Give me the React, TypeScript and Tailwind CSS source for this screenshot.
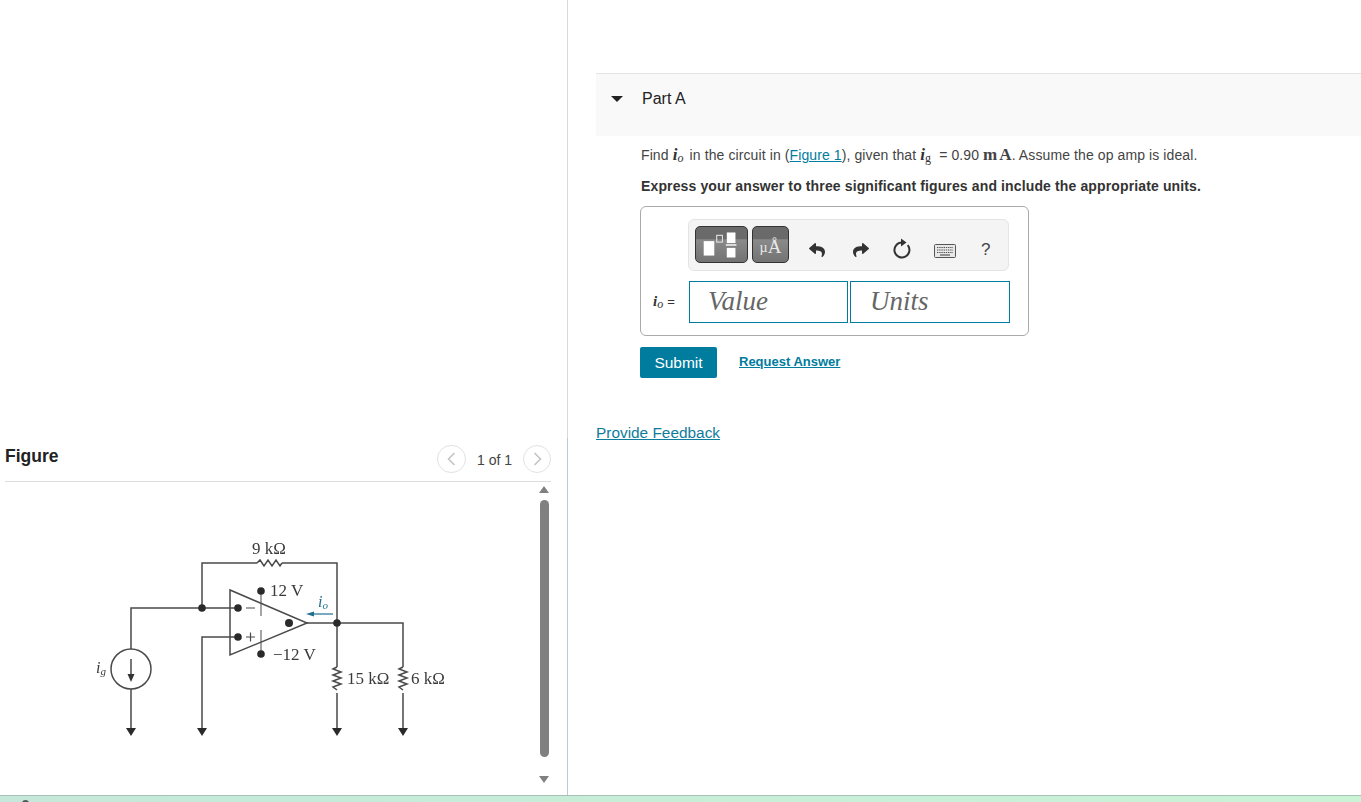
import { FaReply, FaShare } from 'react-icons/fa';

const sans = { fontFamily: '"Liberation Sans", Arial, sans-serif' };

function MathVar({ sub, small }: { sub: string; small?: boolean }) {
  const wide = sub === 'g' ? 'w-[15px]' : 'w-[13px]';
  return (
    <span className={`inline-block ${small ? '' : wide} font-['Liberation_Serif',serif] text-[#333] leading-none`}>
      <i className={small ? 'text-[15px] font-bold' : 'text-[17px] font-bold'}>i</i>
      <sub className={sub === 'g' ? 'static text-[12px] align-[-2px] leading-none' : 'static text-[12px] italic align-[-2px] leading-none'}>{sub}</sub>
    </span>
  );
}

function Circuit() {
  const wire = '#4a4a4a';
  const down = (x: number) => `${x - 5},728 ${x + 5},728 ${x},736`;
  return (
    <svg width="534" height="313" viewBox="5 482 534 313" className="block blur-[0.3px]">
      <g fill="none" stroke={wire} strokeWidth="1.5">
        <path d="M202 608V563H257M282 563H337V667M337 693V729" />
        <path d="M257 563l3 -3 4 6 4 -6 4 6 4 -6 4 6 2 -3" />
        <path d="M131 649V608H238M131 689V729M202 729V637H238" />
        <path d="M307 623H403V667M403 693V729" />
        <path d="M337 667l-4 2 8 3 -8 3 8 3 -8 3 8 3 -8 3 4 3" />
        <path d="M403 667l-4 2 8 3 -8 3 8 3 -8 3 8 3 -8 3 4 3" />
        <path d="M230 590V655L307 623Z" />
        <path d="M261 591V616M261 630V654" strokeWidth="1" />
        <circle cx="131" cy="669" r="20" />
        <path d="M131 659V674" />
        <path d="M246 608H255M246 637H255M250.5 632.5V641.5" strokeWidth="1.2" />
      </g>
      <polygon points="127.5,674 134.5,674 131,682" fill="#333" />
      <g fill="#2a2a2a">
        <circle cx="202" cy="608" r="3.8" />
        <circle cx="238" cy="608" r="3.8" />
        <circle cx="238" cy="637" r="3.8" />
        <circle cx="289" cy="623" r="4" />
        <circle cx="337" cy="623" r="3.8" />
        <circle cx="261" cy="591" r="3.8" />
        <circle cx="261" cy="654" r="3.8" />
        <polygon points={down(131)} />
        <polygon points={down(202)} />
        <polygon points={down(337)} />
        <polygon points={down(403)} />
      </g>
      <path d="M313 614H333" stroke="#1f6f8f" strokeWidth="1.2" />
      <polygon points="306,614 314,611.5 314,616.5" fill="#1f6f8f" />
      <g fontFamily='"Liberation Serif", serif' fontSize="17" fill="#3a3a3a">
        <text x="252" y="554">9 kΩ</text>
        <text x="270" y="596">12 V</text>
        <text x="273" y="660">−12 V</text>
        <text x="347" y="684">15 kΩ</text>
        <text x="411" y="684">6 kΩ</text>
        <text x="318" y="607" fontStyle="italic" fill="#1f6f8f" fontSize="16">i<tspan fontSize="11" dy="2">o</tspan></text>
        <text x="96" y="673" fontStyle="italic" fontSize="16">i<tspan fontSize="11" dy="2">g</tspan></text>
      </g>
    </svg>
  );
}

function TemplateIcon() {
  return (
    <svg width="53" height="37" viewBox="0 0 53 37">
      <rect x="8" y="15" width="11" height="15" fill="#fff" />
      <rect x="21.5" y="9" width="6" height="7" fill="none" stroke="#ddd" strokeWidth="1.2" />
      <rect x="32" y="6" width="9" height="11" fill="#fff" />
      <rect x="31" y="18" width="11" height="2" fill="#ddd" />
      <rect x="32" y="22" width="9" height="10" fill="#fff" />
    </svg>
  );
}

function KeyboardIcon() {
  return (
    <svg width="22" height="14" viewBox="0 0 22 14">
      <rect x="0.5" y="0.5" width="21" height="13" rx="1" fill="#e8e8e8" stroke="#555" />
      <path d="M3 3.5H19M3 6H19M3 8.5H19" stroke="#555" strokeWidth="1" strokeDasharray="1.4 0.8" />
      <path d="M6 11H16" stroke="#555" strokeWidth="1.2" />
    </svg>
  );
}

function ResetIcon() {
  return (
    <svg width="18" height="21" viewBox="0 0 18 21">
      <path d="M9 4.5A7.5 7.5 0 1 0 14.7 7.2" fill="none" stroke="#333" strokeWidth="2" />
      <polygon points="8,0.5 13.5,4.5 8,8.5" fill="#333" />
    </svg>
  );
}

function App() {
  return (
    <div className="w-[1361px] h-[802px] overflow-hidden bg-white flex flex-col" style={sans}>
      <div className="flex h-[795px]">
        {/* Figure pane */}
        <div className="w-[567px] pt-[445px] pl-[5px] pr-[16px]">
          <div className="flex items-start justify-between h-[36px] border-b border-[#dcdcdc] box-content w-[546px]">
            <h2 className="text-[17.5px] leading-[20px] font-bold text-[#222] mt-[1px]">Figure</h2>
            <div className="flex items-center h-[28px]">
              <span className="w-[29px] h-[28px] rounded-full border border-[#e2e2e2] flex items-center justify-center">
                <svg width="9" height="14" viewBox="0 0 9 14"><path d="M7.5 1L1.5 7l6 6" fill="none" stroke="#c4c4c4" strokeWidth="1.6" /></svg>
              </span>
              <span className="text-[14px] text-[#444] ml-[11px] mr-[11px] mt-[2px]">1 of 1</span>
              <span className="w-[28px] h-[28px] rounded-full border border-[#e2e2e2] flex items-center justify-center">
                <svg width="9" height="14" viewBox="0 0 9 14"><path d="M1.5 1l6 6-6 6" fill="none" stroke="#c4c4c4" strokeWidth="1.6" /></svg>
              </span>
            </div>
          </div>
          <div className="flex w-[546px] h-[313px]">
            <Circuit />
            <div className="w-[10px] h-[313px] flex flex-col items-center pt-[4px]">
              <div className="w-0 h-0 border-x-[5px] border-x-transparent border-b-[7px] border-b-[#808080]" />
              <div className="w-[9px] h-[257px] rounded-full bg-[#808080] mt-[7px]" />
              <div className="mt-[19px] w-0 h-0 border-x-[5px] border-x-transparent border-t-[7px] border-t-[#808080]" />
            </div>
          </div>
        </div>

        <div className="w-px flex flex-col">
          <div className="h-[438px] bg-[#d9d9d9]" />
          <div className="flex-1 bg-[#b9c9d8]" />
        </div>

        {/* Question pane */}
        <div className="flex-1 pt-[73px] pl-[28px]">
          <div className="h-[63px] bg-[#f9f9f9] border-t border-[#e3e3e3] flex items-start pt-[15px] pl-[15px]">
            <span className="w-0 h-0 mt-[7px] border-x-[6px] border-x-transparent border-t-[6px] border-t-[#222]" />
            <span className="ml-[19px] text-[16px] leading-[20px] text-[#222]">Part A</span>
          </div>
          <div className="pl-[45px]">
            <p className="mt-[9px] text-[14px] leading-[20px] tracking-[0.1px] text-[#444] whitespace-nowrap">
              Find <MathVar sub="o" /> in the circuit in (<a className="text-[#007c9e] underline">Figure 1</a>), given that <MathVar sub="g" /> = 0.90 <span className="font-['Liberation_Serif',serif] font-bold text-[17px] leading-none"><span className="tracking-[2px]">m</span>A</span>. Assume the op amp is ideal.
            </p>
            <p className="mt-[11px] text-[14px] leading-[20px] tracking-[0.13px] font-bold text-[#333] whitespace-nowrap">
              Express your answer to three significant figures and include the appropriate units.
            </p>

            <div className="mt-[10px] -ml-px w-[389px] h-[130px] border border-[#aaaaaa] rounded-[6px] pt-[12px] pl-[47px]">
              <div className="w-[321px] h-[52px] bg-[#f4f4f4] border border-[#e4e4e4] rounded-[6px] flex items-center pl-[6px]">
                <div className="w-[53px] h-[37px] mb-[1px] rounded-[5px] border border-[#333] bg-[linear-gradient(#6a6a6a_0,#6a6a6a_35%,#8a8a8a_36%,#737373_100%)] flex items-center justify-center">
                  <TemplateIcon />
                </div>
                <div className="ml-[4px] w-[37px] h-[37px] mb-[1px] pt-[5px] rounded-[5px] border border-[#333] bg-[linear-gradient(#6a6a6a_0,#6a6a6a_35%,#8a8a8a_36%,#737373_100%)] flex items-center justify-center font-['Liberation_Serif',serif] text-[#e8e8e8] text-[14px]">
                  µ<span className="text-[19px]">Å</span>
                </div>
                <span className="ml-[20px] mt-[9px] w-[16px] flex justify-center text-[#333]"><FaReply size={16} /></span>
                <span className="ml-[28px] mt-[9px] w-[16px] flex justify-center text-[#333]"><FaShare size={16} /></span>
                <span className="ml-[24px] mt-[7px] flex"><ResetIcon /></span>
                <span className="ml-[23px] mt-[11px] flex"><KeyboardIcon /></span>
                <span className="ml-[25px] mt-[9px] text-[17px] text-[#444]">?</span>
              </div>
              <div className="flex items-center mt-[10px] ml-[-35px]">
                <span className="w-[36px] whitespace-nowrap text-[13px] text-[#333]"><MathVar sub="o" small /><span className="ml-[4px]">=</span></span>
                <div className="w-[159px] h-[42px] border border-[#007c9e] pl-[18px] font-['Liberation_Serif',serif] italic text-[27px] leading-[38px] text-[#666]">Value</div>
                <div className="ml-[2px] w-[160px] h-[42px] border border-[#007c9e] pl-[19px] font-['Liberation_Serif',serif] italic text-[27px] leading-[38px] text-[#666]">Units</div>
              </div>
            </div>

            <div className="mt-[11px] -ml-px flex items-center">
              <button className="w-[77px] h-[31px] bg-[#007c9e] rounded-[2px] text-white text-[15.5px]">Submit</button>
              <a className="ml-[22px] mb-[2px] text-[13px] font-bold text-[#007c9e] underline">Request Answer</a>
            </div>
          </div>
          <a className="block mt-[45px] text-[15.4px] leading-[20px] text-[#0f7c9c] underline">Provide Feedback</a>
        </div>
      </div>

      <div className="relative h-[7px] border-t border-[#a9c0b5] bg-gradient-to-r from-[#c5e8da] to-[#caf3d6]">
        <div className="absolute left-[22px] top-[4px] w-[7px] h-[7px] rounded-full bg-[#555]" />
      </div>
    </div>
  );
}

export default App;
